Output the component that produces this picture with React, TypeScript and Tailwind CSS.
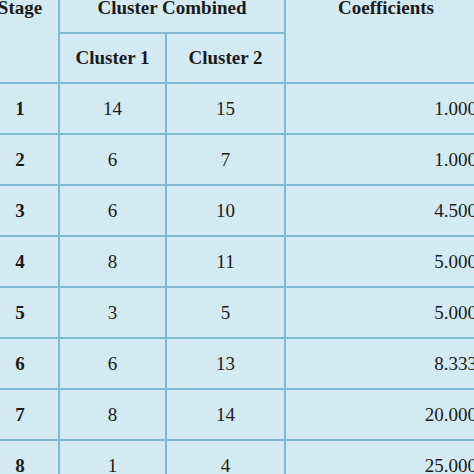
const rows: [number, number, number, string][] = [
  [1, 14, 15, '1.000'],
  [2, 6, 7, '1.000'],
  [3, 6, 10, '4.500'],
  [4, 8, 11, '5.000'],
  [5, 3, 5, '5.000'],
  [6, 6, 13, '8.333'],
  [7, 8, 14, '20.000'],
  [8, 1, 4, '25.000'],
];

const cell = 'border-2 border-[#7dbad0] px-2 text-center align-middle';

export default function App() {
  return (
    <div
      className="w-[474px] h-[474px] overflow-hidden bg-[#d4eaf2] text-[#1b1b1b] text-[19px] leading-[22px]"
      style={{ fontFamily: '"Liberation Serif", "Times New Roman", serif' }}
    >
      <table className="table-fixed border-collapse ml-[-20px] mt-[-19px] w-[506px]">
        <colgroup>
          <col className="w-[78px]" />
          <col className="w-[107px]" />
          <col className="w-[119px]" />
          <col className="w-[202px]" />
        </colgroup>
        <thead>
          <tr className="h-[51px]">
            <th rowSpan={2} className={`${cell} !align-top pt-[14px] font-bold`}>
              Stage
            </th>
            <th colSpan={2} className={`${cell} font-bold`}>
              Cluster Combined
            </th>
            <th rowSpan={2} className={`${cell} !align-top pt-[14px] font-bold`}>
              Coefficients
            </th>
          </tr>
          <tr className="h-[50px]">
            <th className={`${cell} font-bold`}>Cluster 1</th>
            <th className={`${cell} font-bold`}>Cluster 2</th>
          </tr>
        </thead>
        <tbody>
          {rows.map(([stage, a, b, coef]) => (
            <tr key={stage} className="h-[51px]">
              <td className={`${cell} font-bold`}>{stage}</td>
              <td className={cell}>{a}</td>
              <td className={cell}>{b}</td>
              <td className={`${cell} !text-right pr-[9px]`}>{coef}</td>
            </tr>
          ))}
        </tbody>
      </table>
    </div>
  );
}
